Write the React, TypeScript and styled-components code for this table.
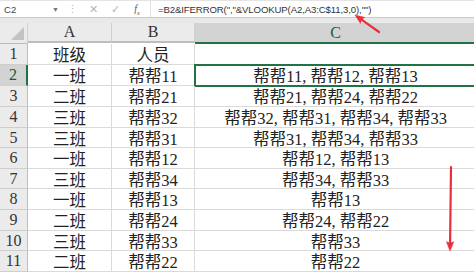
import { Fragment } from "react";
import styled, { createGlobalStyle } from "styled-components";

const GlobalStyle = createGlobalStyle`
  html, body {
    margin: 0;
    padding: 0;
    background: #ffffff;
    overflow: hidden;
  }
`;

const GREEN = "#217346";
const GRID = "#dadada";

type Row = {
  cls: string;
  name: string;
  joined: string;
  height: number;
};

const rows: Row[] = [
  { cls: "班级", name: "人员", joined: "", height: 21 },
  { cls: "一班", name: "帮帮11", joined: "帮帮11, 帮帮12, 帮帮13", height: 21 },
  { cls: "二班", name: "帮帮21", joined: "帮帮21, 帮帮24, 帮帮22", height: 21 },
  { cls: "三班", name: "帮帮32", joined: "帮帮32, 帮帮31, 帮帮34, 帮帮33", height: 21 },
  { cls: "三班", name: "帮帮31", joined: "帮帮31, 帮帮34, 帮帮33", height: 20 },
  { cls: "一班", name: "帮帮12", joined: "帮帮12, 帮帮13", height: 21 },
  { cls: "三班", name: "帮帮34", joined: "帮帮34, 帮帮33", height: 20 },
  { cls: "一班", name: "帮帮13", joined: "帮帮13", height: 21 },
  { cls: "二班", name: "帮帮24", joined: "帮帮24, 帮帮22", height: 21 },
  { cls: "三班", name: "帮帮33", joined: "帮帮33", height: 20 },
  { cls: "二班", name: "帮帮22", joined: "帮帮22", height: 21 },
];

const Sheet = styled.div`
  position: relative;
  width: 474px;
  height: 278px;
  overflow: hidden;
  background: #ffffff;
`;

const FormulaBar = styled.div`
  display: flex;
  align-items: center;
  height: 16px;
  border-top: 1px solid #e4e4e4;
  border-bottom: 1px solid #c9c9c9;
  background: #ffffff;
  font-family: "Liberation Sans", Arial, sans-serif;
  font-size: 9.6px;
  color: #333333;
`;

const NameBox = styled.div`
  width: 62px;
  display: flex;
  align-items: center;
  justify-content: space-between;
  padding: 0 3px 0 4px;
  box-sizing: border-box;
  color: #444444;
`;

const Caret = styled.span`
  font-size: 7px;
  color: #777777;
`;

const BarIcons = styled.div`
  display: flex;
  align-items: center;
  width: 88px;
  height: 100%;
`;

const BarIcon = styled.span<{ $w: number }>`
  width: ${(p) => p.$w}px;
  text-align: center;
  color: #b5b5b5;
  font-size: 11px;
  line-height: 16px;
`;

const Fx = styled.span`
  width: 22px;
  text-align: center;
  font-family: "Liberation Serif", serif;
  font-style: italic;
  font-size: 10px;
  color: #555555;

  sub {
    font-size: 6px;
  }
`;

const FormulaInput = styled.div`
  flex: 1;
  height: 100%;
  display: flex;
  align-items: center;
  padding-left: 7px;
  border-left: 1px solid #e2e2e2;
  white-space: nowrap;
  letter-spacing: -0.12px;
`;

const Gutter = styled.div`
  height: 5px;
  background: #e9e9e9;
`;

const Grid = styled.div<{ $rows: string }>`
  display: grid;
  grid-template-columns: 28px 84px 83px 282px 1fr;
  grid-template-rows: 21px ${(p) => p.$rows};
  font-family: "Liberation Serif", "Noto Sans CJK SC", serif;
  color: #222222;
`;

const Corner = styled.div`
  position: relative;
  background: #ebebeb;
  border-right: 1px solid #cfcfcf;
  border-bottom: 1px solid #bdbdbd;

  &::after {
    content: "";
    position: absolute;
    right: 3px;
    bottom: 3px;
    border-style: solid;
    border-width: 0 0 13px 13px;
    border-color: transparent transparent #c3c3c3 transparent;
  }
`;

const ColHeader = styled.div<{ $active?: boolean }>`
  display: flex;
  align-items: center;
  justify-content: center;
  background: ${(p) => (p.$active ? "#d3d3d3" : "#ebebeb")};
  border-right: 1px solid ${(p) => (p.$active ? "#bdbdbd" : "#cfcfcf")};
  border-bottom: 2px solid ${(p) => (p.$active ? GREEN : "#bdbdbd")};
  margin-bottom: ${(p) => (p.$active ? "0" : "1px")};
  font-size: 16px;
  color: ${(p) => (p.$active ? "#1d5a38" : "#333333")};
`;

const RowHeader = styled.div<{ $active?: boolean }>`
  display: flex;
  align-items: center;
  justify-content: center;
  background: ${(p) => (p.$active ? "#d3d3d3" : "#ebebeb")};
  border-bottom: 1px solid #cfcfcf;
  border-right: ${(p) => (p.$active ? `2px solid ${GREEN}` : "1px solid #bdbdbd")};
  font-size: 16px;
  color: ${(p) => (p.$active ? "#1d5a38" : "#333333")};
`;

const Cell = styled.div<{ $selected?: boolean }>`
  display: flex;
  align-items: center;
  justify-content: center;
  border-right: 1px solid ${GRID};
  border-bottom: 1px solid ${GRID};
  font-size: 16.5px;
  white-space: nowrap;
  overflow: hidden;
  outline: ${(p) => (p.$selected ? `2px solid ${GREEN}` : "none")};
  outline-offset: -1px;
`;

const Marks = styled.svg`
  position: absolute;
  left: 0;
  top: 0;
  pointer-events: none;
`;

function Arrow({ x1, y1, x2, y2 }: { x1: number; y1: number; x2: number; y2: number }) {
  const a = Math.atan2(y2 - y1, x2 - x1);
  const len = 10;
  const spread = 0.38;
  const hx1 = x2 - len * Math.cos(a - spread);
  const hy1 = y2 - len * Math.sin(a - spread);
  const hx2 = x2 - len * Math.cos(a + spread);
  const hy2 = y2 - len * Math.sin(a + spread);
  const bx = x2 - (len - 2) * Math.cos(a);
  const by = y2 - (len - 2) * Math.sin(a);
  return (
    <g fill="#e8303a" stroke="#e8303a">
      <line x1={x1} y1={y1} x2={bx} y2={by} strokeWidth={2.2} strokeLinecap="round" />
      <polygon points={`${x2},${y2} ${hx1},${hy1} ${bx},${by} ${hx2},${hy2}`} strokeWidth={0.5} />
    </g>
  );
}

export default function App() {
  return (
    <Sheet>
      <GlobalStyle />
      <FormulaBar>
        <NameBox>
          <span>C2</span>
          <Caret>▼</Caret>
        </NameBox>
        <BarIcons>
          <BarIcon $w={20}>⋮</BarIcon>
          <BarIcon $w={22}>✕</BarIcon>
          <BarIcon $w={22}>✓</BarIcon>
          <Fx>
            f<sub>x</sub>
          </Fx>
        </BarIcons>
        <FormulaInput>=B2&amp;IFERROR(","&amp;VLOOKUP(A2,A3:C$11,3,0),"")</FormulaInput>
      </FormulaBar>
      <Gutter />
      <Grid $rows={rows.map((r) => `${r.height}px`).join(" ")}>
        <Corner />
        <ColHeader>A</ColHeader>
        <ColHeader>B</ColHeader>
        <ColHeader $active>C</ColHeader>
        <ColHeader />
        {rows.map((r, i) => (
          <Fragment key={i}>
            <RowHeader $active={i === 1}>{i + 1}</RowHeader>
            <Cell>{r.cls}</Cell>
            <Cell>{r.name}</Cell>
            <Cell $selected={i === 1}>{r.joined}</Cell>
            <Cell />
          </Fragment>
        ))}
      </Grid>
      <Marks width={474} height={278}>
        <Arrow x1={379} y1={32} x2={355} y2={15} />
        <Arrow x1={451} y1={167} x2={450} y2={251} />
      </Marks>
    </Sheet>
  );
}
